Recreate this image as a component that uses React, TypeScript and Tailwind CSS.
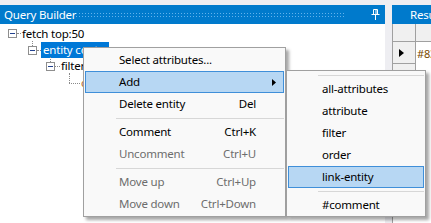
import clsx from 'clsx';

/** Small "minus" expander box used by the tree view. */
function Expander(): JSX.Element {
  return (
    <span className="flex h-[9px] w-[9px] shrink-0 items-center justify-center border border-[#8e8e8e] bg-white">
      <span className="h-px w-[5px] bg-[#23428f]" />
    </span>
  );
}

function PinIcon(): JSX.Element {
  return (
    <svg width="9" height="11" viewBox="0 0 9 11" className="shrink-0">
      <path d="M2.5 0.5h4v5h-4z" fill="none" stroke="#fff" strokeWidth="1" />
      <path d="M5 1v4.5" stroke="#fff" strokeWidth="1" />
      <path d="M0.5 5.5h8" stroke="#fff" strokeWidth="1" />
      <path d="M4.5 6v5" stroke="#fff" strokeWidth="1" />
    </svg>
  );
}

function SubArrow(): JSX.Element {
  return (
    <svg width="4" height="7" viewBox="0 0 4 7">
      <path d="M0 0L4 3.5L0 7z" fill="#000" />
    </svg>
  );
}

interface ItemProps {
  label: string;
  shortcut?: string;
  disabled?: boolean;
  active?: boolean;
  submenu?: boolean;
}

function MenuItem({ label, shortcut, disabled, active, submenu }: ItemProps): JSX.Element {
  return (
    <div
      className={clsx(
        'mx-[1px] flex h-[22px] items-center border',
        active ? 'border-[#3f8fd9] bg-[#b7d7f3]' : 'border-transparent',
        disabled ? 'text-[#6d6d6d]' : 'text-black',
      )}
    >
      <span className="flex-1 pl-[33px]">{label}</span>
      {shortcut && <span>{shortcut}</span>}
      <span className="flex w-[27px] justify-end pr-[7px]">{submenu && <SubArrow />}</span>
    </div>
  );
}

function Separator({ inset }: { inset: string }): JSX.Element {
  return (
    <div className={clsx('h-[6px] pt-[3px] pr-[1px]', inset)}>
      <div className="h-px bg-[#d7d7d7]" />
    </div>
  );
}

function SubItem({ label, active }: { label: string; active?: boolean }): JSX.Element {
  return (
    <div
      className={clsx(
        'mx-[1px] flex h-[22px] items-center border pl-[33px] text-black',
        active ? 'border-[#3f8fd9] bg-[#b7d7f3]' : 'border-transparent',
      )}
    >
      {label}
    </div>
  );
}

export default function App(): JSX.Element {
  return (
    <div className="relative h-[223px] w-[431px] overflow-hidden whitespace-nowrap bg-[#eeeef2] font-['Noto_Sans','Segoe_UI',sans-serif] text-[11.5px] leading-none tracking-[-0.2px]">
      <div className="flex h-full pt-[5px]">
        {/* Query Builder panel */}
        <section className="flex w-[385px] shrink-0 flex-col">
          <header className="flex h-[19px] shrink-0 items-center bg-[#007acc] pl-[4px] text-white">
            <span className="w-[62px] shrink-0">Query Builder</span>
            <span className="ml-[9px] h-[5px] w-[270px] shrink-0 bg-[radial-gradient(circle,#62b2ec_0.7px,transparent_1px)] bg-[length:3px_3px]" />
            <span className="ml-[26px]">
              <PinIcon />
            </span>
          </header>
          <div className="relative flex-1 bg-white pt-[1px] text-black">
            <div className="flex h-[17px] items-center pl-[8px]">
              <Expander />
              <span className="w-[4px] border-t border-dotted border-[#8a8a8a]" />
              <span className="px-[1px]">fetch top:50</span>
            </div>
            <div className="flex h-[16px] items-center pl-[28px]">
              <Expander />
              <span className="w-[4px] border-t border-dotted border-[#8a8a8a]" />
              <span className="flex h-[16px] w-[68px] items-center overflow-hidden bg-[#0078d7] px-[2px] text-white">
                entity contact
              </span>
            </div>
            <div className="flex h-[16px] items-center pl-[46px]">
              <Expander />
              <span className="w-[5px] border-t border-dotted border-[#8a8a8a]" />
              <span className="px-[1px]">filter</span>
            </div>
            <div className="flex h-[17px] items-center pl-[81px] text-[#b5651d]">condition</div>

            {/* tree connector lines */}
            <span className="absolute left-[32px] top-[17px] h-[5px] border-l border-dotted border-[#8a8a8a]" />
            <span className="absolute left-[50px] top-[33px] h-[5px] border-l border-dotted border-[#8a8a8a]" />
            <span className="absolute left-[69px] top-[49px] h-[10px] border-l border-dotted border-[#8a8a8a]" />
            <span className="absolute left-[69px] top-[59px] w-[11px] border-t border-dotted border-[#8a8a8a]" />
          </div>
        </section>

        {/* Results panel */}
        <section className="ml-[7px] flex min-w-0 flex-1 flex-col overflow-hidden">
          <header className="flex h-[19px] shrink-0 items-center bg-[#007acc] pl-[18px] text-white">
            Results
          </header>
          <div className="flex-1 border-l border-[#a0a0a0] bg-white">
            <div className="flex h-[18px] border-b border-[#a0a0a0] bg-[#f0f0f0]">
              <div className="w-[23px] shrink-0 border-r border-[#a0a0a0]" />
            </div>
            <div className="flex h-[22px]">
              <div className="flex w-[23px] shrink-0 items-center border-r border-b border-[#a0a0a0] bg-[#f0f0f0] pl-[6px]">
                <svg width="5" height="8" viewBox="0 0 5 8">
                  <path d="M0 0L5 4L0 8z" fill="#000" />
                </svg>
              </div>
              <div className="flex items-center pl-[1px] text-[11px] text-[#7a4a00]">#830(</div>
            </div>
            <div className="h-[140px] w-[23px] border-r border-[#a0a0a0] bg-[#f0f0f0]" />
          </div>
        </section>
      </div>

      {/* Context menu */}
      <div className="absolute left-[83px] top-[47px] w-[203px] border border-[#a0a0a0] bg-[#f9f9f9] py-[1px] shadow-[3px_3px_3px_rgba(0,0,0,0.35)]">
        <MenuItem label="Select attributes..." />
        <MenuItem label="Add" active submenu />
        <MenuItem label="Delete entity" shortcut="Del" />
        <Separator inset="pl-[32px]" />
        <MenuItem label="Comment" shortcut="Ctrl+K" />
        <MenuItem label="Uncomment" shortcut="Ctrl+U" disabled />
        <Separator inset="pl-[32px]" />
        <MenuItem label="Move up" shortcut="Ctrl+Up" disabled />
        <MenuItem label="Move down" shortcut="Ctrl+Down" disabled />
      </div>

      {/* Add submenu */}
      <div className="absolute left-[286px] top-[70px] w-[140px] border border-[#a0a0a0] bg-[#f9f9f9] pt-[1px] shadow-[3px_3px_3px_rgba(0,0,0,0.35)]">
        <Separator inset="pl-[31px]" />
        <SubItem label="all-attributes" />
        <SubItem label="attribute" />
        <SubItem label="filter" />
        <SubItem label="order" />
        <SubItem label="link-entity" active />
        <Separator inset="pl-[31px]" />
        <SubItem label="#comment" />
      </div>
    </div>
  );
}
